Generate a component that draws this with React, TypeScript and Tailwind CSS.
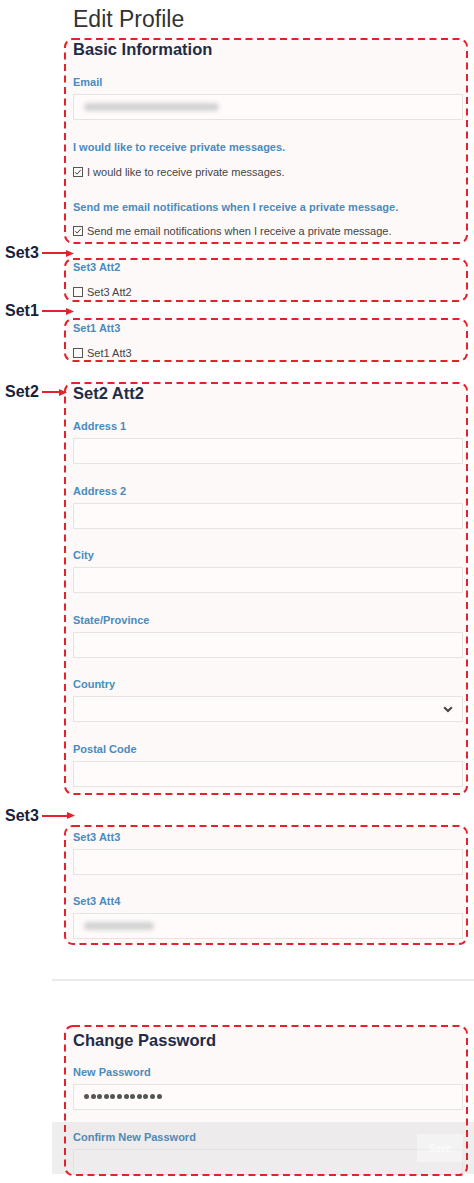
import React from "react";

const FONT = { fontFamily: '"Liberation Sans", Arial, sans-serif' };

function DashedBox({
  children,
  className = "",
  tag,
}: {
  children: React.ReactNode;
  className?: string;
  tag?: React.ReactNode;
}) {
  return (
    <div className={"relative -ml-[8px] -mr-[4px] pl-[8px] pr-[4px] bg-[#fdf9f9] rounded-[8px] " + className}>
      {children}
      <svg className="pointer-events-none absolute inset-0 z-20 h-full w-full overflow-visible">
        <rect
          x="0"
          y="0"
          rx="8"
          ry="8"
          className="h-full w-full"
          fill="none"
          stroke="#e3232c"
          strokeWidth="2"
          strokeDasharray="7 4.5"
        />
      </svg>
      {tag}
    </div>
  );
}

function Tag({ text, pos, arrowW }: { text: string; pos: string; arrowW: string }) {
  return (
    <div className={"absolute left-[-60px] flex items-center " + pos}>
      <span className="text-[16px] leading-[18px] font-bold text-[#18213a]">{text}</span>
      <span className="ml-[3px] flex items-center">
        <span className={"h-[2px] bg-[#e3232c] " + arrowW} />
        <svg width="8" height="7" viewBox="0 0 8 7" className="-ml-[1px]">
          <path d="M0 0 L8 3.5 L0 7 Z" fill="#e3232c" />
        </svg>
      </span>
    </div>
  );
}

function Label({ children, className = "" }: { children: React.ReactNode; className?: string }) {
  return <div className={"text-[11px] leading-[14px] font-bold text-[#4a8bbd] " + className}>{children}</div>;
}

function Input({ children }: { children?: React.ReactNode }) {
  return (
    <div className="mt-[5px] h-[26px] border border-[#e6e3e3] bg-[#fffbfb] flex items-center px-[10px]">
      {children}
    </div>
  );
}

function Field({ label, children }: { label: string; children?: React.ReactNode }) {
  return (
    <div>
      <Label>{label}</Label>
      <Input>{children}</Input>
    </div>
  );
}

function Check({ checked, text }: { checked?: boolean; text: string }) {
  return (
    <div className="flex items-center text-[11px] leading-[14px] text-[#444]">
      <svg width="10" height="10" viewBox="0 0 10 10" className="mr-[4px]">
        <rect x="0.5" y="0.5" width="9" height="9" fill="none" stroke="#555" strokeWidth="1" />
        {checked && <path d="M2.2 5.2 L4.2 7.1 L7.8 2.8" fill="none" stroke="#444" strokeWidth="1" />}
      </svg>
      <span>{text}</span>
    </div>
  );
}

function Heading({ children }: { children: React.ReactNode }) {
  return <div className="text-[16.5px] leading-[20px] font-bold text-[#1f2c47]">{children}</div>;
}

export default function App() {
  return (
    <div className="relative w-[474px] h-[1183px] overflow-hidden bg-white" style={FONT}>
      <div className="ml-[52px] w-[422px]">
        <div className="pl-[21px] pr-[11px]">
          <h1 className="pt-[6px] text-[23px] leading-[26px] text-[#333]">Edit Profile</h1>

          <DashedBox className="mt-[7px] pb-[5px]">
            <Heading>Basic Information</Heading>
            <div className="mt-[16px]">
              <Field label="Email">
                <div className="relative w-[135px] h-[8px]">
                  <div className="absolute inset-0 bg-[#d2d2d2] blur-[2px] rounded-full" />
                </div>
              </Field>
            </div>
            <div className="mt-[20px]">
              <Label>I would like to receive private messages.</Label>
            </div>
            <div className="mt-[11px]">
              <Check checked text="I would like to receive private messages." />
            </div>
            <div className="mt-[21px]">
              <Label>Send me email notifications when I receive a private message.</Label>
            </div>
            <div className="mt-[10px]">
              <Check checked text="Send me email notifications when I receive a private message." />
            </div>
          </DashedBox>

          <DashedBox
            className="mt-[16px] pt-[1px] pb-[2px]"
            tag={<Tag text="Set3" pos="top-[-15px]" arrowW="w-[25px]" />}
          >
            <Label>Set3 Att2</Label>
            <div className="mt-[11px]">
              <Check text="Set3 Att2" />
            </div>
          </DashedBox>

          <DashedBox
            className="mt-[18px] pt-[2px] pb-[1px]"
            tag={<Tag text="Set1" pos="top-[-17px]" arrowW="w-[25px]" />}
          >
            <Label>Set1 Att3</Label>
            <div className="mt-[11px]">
              <Check text="Set1 Att3" />
            </div>
          </DashedBox>

          <DashedBox
            className="mt-[22px] pb-[7px]"
            tag={<Tag text="Set2" pos="top-[0px]" arrowW="w-[18px]" />}
          >
            <Heading>Set2 Att2</Heading>
            <div className="mt-[16px] flex flex-col gap-[19.6px]">
              <Field label="Address 1" />
              <Field label="Address 2" />
              <Field label="City" />
              <Field label="State/Province" />
              <div>
                <Label>Country</Label>
                <div className="mt-[5px] h-[26px] border border-[#e6e3e3] bg-[#fffbfb] flex items-center justify-end pr-[9px]">
                  <svg width="10" height="7" viewBox="0 0 10 7">
                    <path d="M1.2 1.2 L5 5 L8.8 1.2" fill="none" stroke="#444" strokeWidth="2" />
                  </svg>
                </div>
              </div>
              <Field label="Postal Code" />
            </div>
          </DashedBox>

          <DashedBox
            className="mt-[32px] pt-[4px] pb-[5px]"
            tag={<Tag text="Set3" pos="top-[-19px]" arrowW="w-[26px]" />}
          >
            <div className="flex flex-col gap-[19px]">
              <Field label="Set3 Att3" />
              <Field label="Set3 Att4">
                <div className="relative w-[70px] h-[8px]">
                  <div className="absolute inset-0 bg-[#d2d2d2] blur-[2px] rounded-full" />
                </div>
              </Field>
            </div>
          </DashedBox>
        </div>

        <div className="mt-[35px] h-[2px] bg-[#e9e9e9]" />

        <div className="pl-[21px] pr-[11px]">
          <DashedBox className="mt-[45px] pt-[4px]">
            <Heading>Change Password</Heading>
            <div className="mt-[15px]">
              <Field label="New Password">
                <div className="flex gap-[1.6px]">
                  {Array.from({ length: 12 }).map((_, i) => (
                    <span key={i} className="block w-[5px] h-[5px] rounded-full bg-[#555]" />
                  ))}
                </div>
              </Field>
            </div>
            <div className="mt-[20px]">
              <Label className="relative z-20 text-[#4f89b5]">Confirm New Password</Label>
              <Input />
            </div>
          </DashedBox>
        </div>
      </div>

      <div className="absolute z-10 left-[52px] right-0 top-[1122px] h-[52px] bg-[#dedede]/50 flex items-center justify-end pr-[11px]">
        <div className="w-[46px] h-[28px] bg-white/40 flex items-center justify-center text-[10px] text-white/80">
          Save
        </div>
      </div>
    </div>
  );
}
